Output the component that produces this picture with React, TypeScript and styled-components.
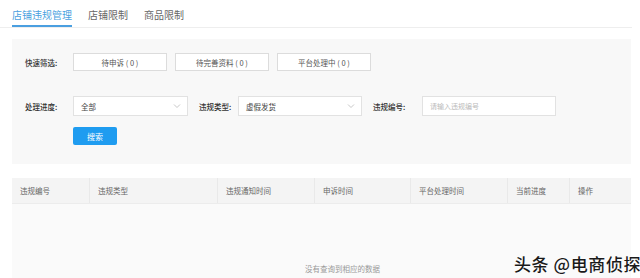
import React from "react";
import styled, { createGlobalStyle } from "styled-components";

const Global = createGlobalStyle`
  html, body { margin: 0; padding: 0; background: #fff; }
  body { font-family: "Noto Sans CJK SC", "Noto Sans", sans-serif; }
  * { box-sizing: border-box; }
`;

const Page = styled.div`
  position: relative;
  width: 640px;
  height: 278px;
  overflow: hidden;
  background: #fff;
`;

const TabBar = styled.div`
  display: flex;
  gap: 16px;
  height: 28px;
  margin: 0 8px 0 0;
  padding-left: 12px;
  border-bottom: 1px solid #eeeeee;
`;

const Tab = styled.div<{ $active?: boolean }>`
  display: flex;
  align-items: center;
  height: 27px;
  padding-top: 4px;
  font-size: 10px;
  color: ${(p) => (p.$active ? "#4a9fe0" : "#666")};
  border-bottom: 2px solid ${(p) => (p.$active ? "#4a9fe0" : "transparent")};
  margin-bottom: -1px;
`;

const Panel = styled.div`
  margin: 11px 9px 0 12px;
  background: #f8f8f8;
  padding: 14px 0 19px 13px;
  display: flex;
  flex-direction: column;
`;

const Row = styled.div<{ $mt?: number }>`
  display: flex;
  align-items: center;
  margin-top: ${(p) => p.$mt ?? 0}px;
`;

const Label = styled.div<{ $w: number }>`
  width: ${(p) => p.$w}px;
  font-size: 7.5px;
  color: #333;
  font-weight: 500;
`;

const QuickBtn = styled.div`
  width: 94px;
  height: 18px;
  margin-right: 8px;
  border: 1px solid #dcdcdc;
  background: #fff;
  display: flex;
  align-items: center;
  justify-content: center;
  font-size: 7.5px;
  color: #555;
`;

const Select = styled.div<{ $w: number }>`
  width: ${(p) => p.$w}px;
  height: 20px;
  margin-right: 11px;
  border: 1px solid #e2e2e2;
  background: #fff;
  display: flex;
  align-items: center;
  justify-content: space-between;
  padding: 0 6px 0 7px;
  font-size: 7.5px;
  color: #444;
`;

const Input = styled.div`
  width: 134px;
  height: 20px;
  border: 1px solid #e2e2e2;
  background: #fff;
  display: flex;
  align-items: center;
  padding-left: 7px;
  font-size: 7px;
  color: #bbb;
`;

const SearchBtn = styled.div`
  margin-left: 48px;
  width: 44px;
  height: 18px;
  border-radius: 2px;
  background: #1f9cf0;
  color: #fff;
  font-size: 8px;
  display: flex;
  align-items: center;
  justify-content: center;
`;

const Table = styled.div`
  margin: 14px 9px 0 12px;
`;

const HeadRow = styled.div`
  display: grid;
  grid-template-columns: 78px 128px 97px 96px 97px 62px 1fr;
  height: 26px;
  background: #f4f4f4;
  border-bottom: 1px solid #ececec;
`;

const HeadCell = styled.div<{ $last?: boolean }>`
  display: flex;
  align-items: center;
  padding-left: 8px;
  font-size: 7.5px;
  color: #666;
  border-right: ${(p) => (p.$last ? "none" : "1px solid #e9e9e9")};
`;

const Body = styled.div`
  height: 80px;
  background: #fafafa;
  display: flex;
  align-items: flex-end;
  padding: 0 0 10px 293px;
  font-size: 7.5px;
  color: #999;
`;

const Watermark = styled.div`
  position: absolute;
  left: 514px;
  top: 251px;
  font-size: 17px;
  font-weight: 500;
  color: #1a1a1a;
  white-space: nowrap;
  letter-spacing: 0.6px;
  text-shadow: 0 0 2px #fff, 0 0 2px #fff;
`;

const Chevron = () => (
  <svg width="8" height="6" viewBox="0 0 8 6">
    <path d="M1 1.5 L4 4.5 L7 1.5" fill="none" stroke="#c8c8c8" strokeWidth="1" />
  </svg>
);

const columns = ["违规编号", "违规类型", "违规通知时间", "申诉时间", "平台处理时间", "当前进度", "操作"];

export default function App() {
  return (
    <Page>
      <Global />
      <TabBar>
        <Tab $active>店铺违规管理</Tab>
        <Tab>店铺限制</Tab>
        <Tab>商品限制</Tab>
      </TabBar>
      <Panel>
        <Row>
          <Label $w={48}>快速筛选:</Label>
          <QuickBtn>待申诉 ( 0 )</QuickBtn>
          <QuickBtn>待完善资料 ( 0 )</QuickBtn>
          <QuickBtn>平台处理中 ( 0 )</QuickBtn>
        </Row>
        <Row $mt={25}>
          <Label $w={48}>处理进度:</Label>
          <Select $w={115}>
            全部
            <Chevron />
          </Select>
          <Label $w={39}>违规类型:</Label>
          <Select $w={124}>
            虚假发货
            <Chevron />
          </Select>
          <Label $w={49}>违规编号:</Label>
          <Input>请输入违规编号</Input>
        </Row>
        <Row $mt={11}>
          <SearchBtn>搜索</SearchBtn>
        </Row>
      </Panel>
      <Table>
        <HeadRow>
          {columns.map((c, i) => (
            <HeadCell key={c} $last={i === columns.length - 1}>
              {c}
            </HeadCell>
          ))}
        </HeadRow>
        <Body>没有查询到相应的数据</Body>
      </Table>
      <Watermark>头条 @电商侦探</Watermark>
    </Page>
  );
}
